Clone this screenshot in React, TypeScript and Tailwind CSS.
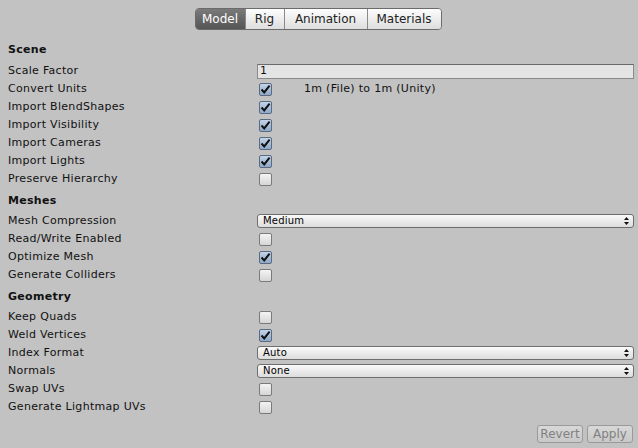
import React from 'react'

type Row =
  | { kind: 'header'; label: string }
  | { kind: 'check'; label: string; checked: boolean; note?: string }
  | { kind: 'text'; label: string; value: string }
  | { kind: 'select'; label: string; value: string }

const ROWS: Row[] = [
  { kind: 'header', label: 'Scene' },
  { kind: 'text', label: 'Scale Factor', value: '1' },
  { kind: 'check', label: 'Convert Units', checked: true, note: '1m (File) to 1m (Unity)' },
  { kind: 'check', label: 'Import BlendShapes', checked: true },
  { kind: 'check', label: 'Import Visibility', checked: true },
  { kind: 'check', label: 'Import Cameras', checked: true },
  { kind: 'check', label: 'Import Lights', checked: true },
  { kind: 'check', label: 'Preserve Hierarchy', checked: false },
  { kind: 'header', label: 'Meshes' },
  { kind: 'select', label: 'Mesh Compression', value: 'Medium' },
  { kind: 'check', label: 'Read/Write Enabled', checked: false },
  { kind: 'check', label: 'Optimize Mesh', checked: true },
  { kind: 'check', label: 'Generate Colliders', checked: false },
  { kind: 'header', label: 'Geometry' },
  { kind: 'check', label: 'Keep Quads', checked: false },
  { kind: 'check', label: 'Weld Vertices', checked: true },
  { kind: 'select', label: 'Index Format', value: 'Auto' },
  { kind: 'select', label: 'Normals', value: 'None' },
  { kind: 'check', label: 'Swap UVs', checked: false },
  { kind: 'check', label: 'Generate Lightmap UVs', checked: false },
]

const TABS = [
  { label: 'Model', w: 'w-[49px]' },
  { label: 'Rig', w: 'w-[39px]' },
  { label: 'Animation', w: 'w-[83px]' },
  { label: 'Materials', w: 'w-[74px]' },
]

function Checkbox({ checked }: { checked: boolean }) {
  if (!checked) {
    return (
      <div className="ml-[3px] h-[13px] w-[13px] rounded-[2px] border border-[#7a7a7a] bg-gradient-to-b from-[#f4f4f4] to-[#d6d6d6]" />
    )
  }
  return (
    <div className="ml-[3px] flex h-[13px] w-[13px] items-center justify-center rounded-[2px] border border-[#5a6a80] bg-gradient-to-b from-[#c4d4e8] to-[#8ea8c8]">
      <svg width="11" height="11" viewBox="0 0 11 11">
        <path d="M1.5 5.5 L4.2 8.4 L9.6 1.6" fill="none" stroke="#111" strokeWidth="2" />
      </svg>
    </div>
  )
}

function Select({ value }: { value: string }) {
  return (
    <div className="ml-px mr-[4px] flex h-[14px] flex-1 items-center justify-between rounded-[3px] border border-[#6e6e6e] bg-gradient-to-b from-[#fafafa] to-[#dcdcdc] pl-[5px] pr-[4px] text-[10px] leading-none tracking-[0.2px] text-black">
      <span>{value}</span>
      <svg width="5" height="8" viewBox="0 0 5 8">
        <path d="M2.5 0 L5 3 L0 3 Z M0 5 L5 5 L2.5 8 Z" fill="#111" />
      </svg>
    </div>
  )
}

export default function App() {
  return (
    <div
      className="h-[448px] w-[638px] overflow-hidden bg-[#c2c2c2] text-[11px] tracking-[0.3px] text-[#111]"
      style={{ fontFamily: '"DejaVu Sans", Verdana, sans-serif' }}
    >
      <div className="flex justify-center pt-[8px] pr-[2px]">
        <div className="flex h-[22px] overflow-hidden rounded-[4px] border border-[#6b6b6b] text-[12px] tracking-normal">
          {TABS.map((t, i) => (
            <div
              key={t.label}
              className={
                i === 0
                  ? `flex ${t.w} items-center justify-center bg-gradient-to-b from-[#7a7a7a] to-[#555] text-white`
                  : `flex ${t.w} items-center justify-center border-l border-[#8a8a8a] bg-gradient-to-b from-[#fdfdfd] to-[#dedede] text-[#222]`
              }
            >
              {t.label}
            </div>
          ))}
        </div>
      </div>

      <div className="mt-[11px]">
        {ROWS.map((r, i) => {
          if (r.kind === 'header') {
            return (
              <div key={i} className={`flex h-[18px] items-center px-2 font-bold ${i === 0 ? 'mb-[3px]' : 'mt-[4px] mb-[2px]'}`}>
                {r.label}
              </div>
            )
          }
          return (
            <div key={i} className="flex h-[18px] items-center pl-2">
              <div className="w-[248px] shrink-0">{r.label}</div>
              {r.kind === 'check' && (
                <>
                  <Checkbox checked={r.checked} />
                  {r.note && <span className="ml-[32px]">{r.note}</span>}
                </>
              )}
              {r.kind === 'text' && (
                <div className="ml-px mr-[4px] flex h-[15px] flex-1 items-center border border-[#8a8a8a] border-t-[#6a6a6a] bg-[#e4e4e4] pl-[2px]">
                  {r.value}
                </div>
              )}
              {r.kind === 'select' && <Select value={r.value} />}
            </div>
          )
        })}
      </div>

      <div className="mt-[9px] flex justify-end gap-[4px] pr-[5px]">
        {['Revert', 'Apply'].map(b => (
          <div
            key={b}
            className="flex h-[18px] w-[46px] items-center justify-center rounded-[3px] border border-[#9a9a9a] bg-gradient-to-b from-[#d8d8d8] to-[#c8c8c8] text-[12px] tracking-normal text-[#808080]"
          >
            {b}
          </div>
        ))}
      </div>
    </div>
  )
}
